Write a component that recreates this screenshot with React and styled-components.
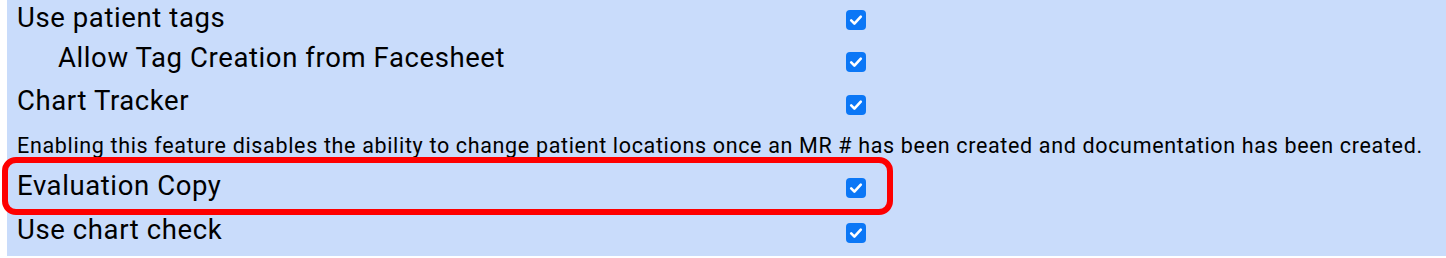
import React from 'react'
import styled, { createGlobalStyle } from 'styled-components'

const GlobalStyle = createGlobalStyle`
    html, body {
        margin: 0;
        padding: 0;
        background: #ffffff;
    }
    body {
        font-family: Roboto, "Liberation Sans", Arial, sans-serif;
        color: #000;
    }
`

const Panel = styled.div`
    margin-left: 7px;
    height: 256px;
    background-color: #c9dcfb;
    padding-left: 10px;
    padding-top: 0;
    box-sizing: border-box;
`

const Row = styled.div`
    position: relative;
    display: grid;
    grid-template-columns: 829px 20px;
    align-items: center;
    height: ${props => props.height || 43}px;
`

const Label = styled.div`
    font-size: 27.5px;
    line-height: 30px;
    letter-spacing: 0.6px;
    padding-left: ${props => (props.indent ? 41 : 0)}px;
    margin-top: ${props => props.shift || -7}px;
    white-space: nowrap;
`

const Note = styled.div`
    grid-column: 1 / span 2;
    font-size: 21.5px;
    line-height: 24px;
    letter-spacing: 0.66px;
    white-space: nowrap;
`

const Box = styled.span`
    width: 20px;
    height: 20px;
    border-radius: 4px;
    background: #0b77f6;
    display: flex;
    align-items: center;
    justify-content: center;
`

const Highlight = styled.div`
    position: absolute;
    left: -15px;
    top: -8px;
    width: 891px;
    height: 58px;
    border: 6px solid #fe0000;
    border-radius: 14px;
    box-sizing: border-box;
    pointer-events: none;
`

const Check = () => (
    <Box>
        <svg width="14" height="14" viewBox="0 0 14 14">
            <path d="M2.2 7.4 L5.4 10.6 L11.8 3.6" fill="none" stroke="#fff" strokeWidth="2.6" strokeLinecap="round" strokeLinejoin="round" />
        </svg>
    </Box>
)

const settings = [
    { label: 'Use patient tags' },
    { label: 'Allow Tag Creation from Facesheet', indent: true },
    { label: 'Chart Tracker' },
]

const App = () => {
    return (
        <>
            <GlobalStyle />
            <Panel>
                {settings.map((s, i) => (
                    <Row key={s.label} height={i === 0 ? 40 : 43}>
                        <Label indent={s.indent} shift={i === 0 ? -5 : -7}>{s.label}</Label>
                        <Check />
                    </Row>
                ))}
                <Row height={39}>
                    <Note>Enabling this feature disables the ability to change patient locations once an MR # has been created and documentation has been created.</Note>
                </Row>
                <Row height={46}>
                    <Label shift={-5}>Evaluation Copy</Label>
                    <Check />
                    <Highlight />
                </Row>
                <Row height={44}>
                    <Label shift={-7}>Use chart check</Label>
                    <Check />
                </Row>
            </Panel>
        </>
    )
}

export default App
